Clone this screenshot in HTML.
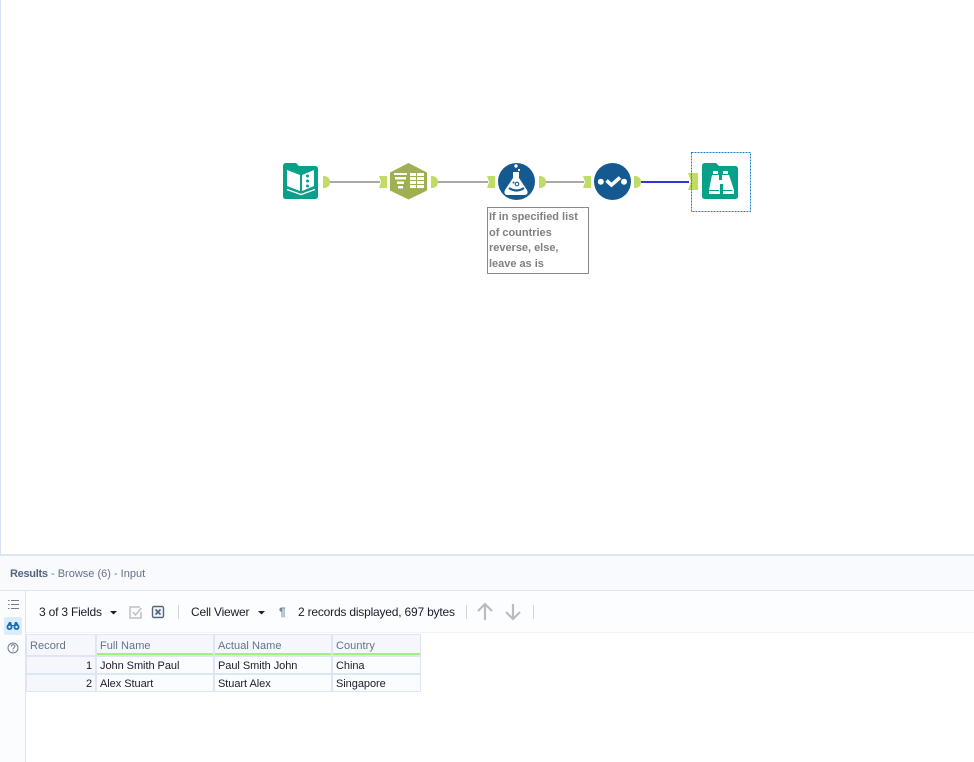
<!DOCTYPE html>
<html><head><meta charset="utf-8">
<style>
html,body{margin:0;padding:0;background:#fff}
#p{position:relative;width:974px;height:762px;overflow:hidden;background:#fff;font-family:"Liberation Sans",sans-serif;font-size:12px;color:#1c1c2a}
#p div{position:absolute;box-sizing:border-box}
.t{white-space:nowrap;line-height:16px;letter-spacing:-.2px}
.s{font-size:11px;letter-spacing:-.05px}
.g{color:#66728a;letter-spacing:.05px}
.c{background:#fbfcff}
.h{background:#f5f7fc}
.note{font-weight:bold;color:#808080;font-size:11px;line-height:15.500px;letter-spacing:-.02px}
</style></head><body><div id="p">
<div style="left:0;top:0;width:1px;height:555px;background:#d5e2f4"></div>
<svg style="position:absolute;left:0;top:0" width="974" height="300" viewBox="0 0 974 300">
<g stroke="#a8a8a8" stroke-width="2"><path d="M330 182H380M438 182H488M546 182H584"/></g>
<path d="M641 182H689" stroke="#3535e0" stroke-width="2"/>
<g fill="#c1dc66">
<path d="M323 176h2q5 1 5 6t-5 6h-2z"/>
<path d="M431 176h2q5 1 5 6t-5 6h-2z"/><path d="M539 176h2q5 1 5 6t-5 6h-2z"/><path d="M634 176h2q5 1 5 6t-5 6h-2z"/>
<path d="M379 176h8v12h-8l2-6z"/><path d="M487 176h8v12h-8l2-6z"/><path d="M583 176h8v12h-8l2-6z"/>
<path d="M688 173h10v17h-10l3-8.500z"/>
</g>
<!-- input book -->
<path d="M283 166q0-3 3-3h10l3 3h16q3 0 3 3v27q0 3-3 3h-29q-3 0-3-3z" fill="#08a088"/>
<path d="M287 170l13 5v16l-13-5zM302 175l12-5v16l-12 5z" fill="#fff"/>
<path d="M287 189.500l14 5 14-5" fill="none" stroke="#fff" stroke-width="1.300"/>
<g fill="#08a088"><circle cx="307.500" cy="176" r="1.500"/><circle cx="307.500" cy="181" r="1.500"/><circle cx="307.500" cy="186" r="1.500"/></g>
<!-- hexagon -->
<path d="M408.500 163l18.500 9.500v18l-18.500 9-18.500-9v-18z" fill="#9fb052"/>
<g fill="#fff"><path d="M394 173h13v2h-13zM395 177h11v2.500h-11zM397 181.500h7v2.500h-7zM398 186h5v2.500h-5z"/>
<rect x="410" y="173" width="14" height="15"/></g>
<path d="M410 176.500h14M410 180.500h14M410 184.500h14M416.500 173v15" stroke="#9fb052" stroke-width="1"/>
<!-- flask -->
<circle cx="516.500" cy="181.500" r="18.500" fill="#14598f"/>
<g fill="#fff"><circle cx="516" cy="166" r="1.700"/><circle cx="519" cy="170" r="1.100"/></g>
<path d="M513 172h6v6l8 12q2 5-3 5h-16q-5 0-3-5l8-12z" fill="#fff"/>
<path d="M509 188q7.500 5 15 0" fill="none" stroke="#14598f" stroke-width="2.200"/>
<circle cx="517" cy="184" r="1.800" fill="none" stroke="#14598f" stroke-width="1.100"/><circle cx="513.500" cy="182.500" r="1" fill="#14598f"/>
<!-- check -->
<circle cx="612.500" cy="181.500" r="18.500" fill="#14598f"/>
<g fill="#fff"><circle cx="600.800" cy="181.700" r="3"/><circle cx="624" cy="181.700" r="3"/></g>
<path d="M606.500 180.500l5 4.500 8.500-7.500" fill="none" stroke="#fff" stroke-width="3.600"/>
<!-- browse -->
<rect x="691.500" y="152.500" width="59" height="59" fill="none" stroke="#1b80c8" stroke-dasharray="2 1"/>
<path d="M702 166q0-3 3-3h11l3 3h16q3 0 3 3v27q0 3-3 3h-30q-3 0-3-3z" fill="#08a088"/>
<g fill="#fff"><path d="M713 171h5v3h-5zM723 171h5v3h-5z"/>
<path d="M712 175h7v5h3v-5h7l5 15v4h-11v-10h-3v10h-11v-4z"/></g>
<path d="M709 190.500h10M722.500 190.500h10" stroke="#08a088" stroke-width="1"/>
</svg>
<div style="left:487px;top:207px;width:102px;height:67px;border:1px solid #8a8a8a;background:#fff"></div>
<div class="note t" style="left:489px;top:210px;line-height:15.500px;letter-spacing:-.02px">If in specified list<br>of countries<br>reverse, else,<br>leave as is</div>

<div style="left:0;top:554px;width:974px;height:2px;background:#dde5f1"></div>
<div style="left:0;top:556px;width:974px;height:34px;background:#f8fafd"></div>
<div style="left:0;top:590px;width:974px;height:1px;background:#dde5f1"></div>
<div class="t" style="left:10px;top:566px;font-size:11px;color:#56647e;font-weight:bold;letter-spacing:-.3px">Results</div>
<div class="t" style="left:51px;top:566px;font-size:11px;color:#66728a;letter-spacing:0">- Browse (6) - Input</div>
<div style="left:0;top:591px;width:25px;height:171px;background:#fbfcfe"></div>
<div style="left:25px;top:591px;width:1px;height:171px;background:#dde5f1"></div>
<div style="left:4px;top:617px;width:18px;height:18px;background:#dcecfb;border-radius:2px"></div>
<svg style="position:absolute;left:0;top:591px" width="26" height="70" viewBox="0 0 26 70">
<g stroke="#6f7b92" fill="none"><path d="M11 9.500h8M11 13.500h8M11 17.500h8M8 9.500h1.500M8 13.500h1.500M8 17.500h1.500"/>
<circle cx="13" cy="57" r="5"/><path d="M11.300 55.500q.5-2 2-1.800 2 .4 1.500 2-.5 1-1.600 1.800v.8M13.200 59.500v1"/></g>
<g fill="#1a6fb8"><circle cx="9.500" cy="36" r="3"/><circle cx="16.500" cy="36" r="3"/><path d="M9 31h2l1 3h2l1-3h2l2 4h-12z"/></g>
<g fill="#dcecfb"><circle cx="9.500" cy="36" r="1.200"/><circle cx="16.500" cy="36" r="1.200"/></g>
</svg>
<div style="left:26px;top:591px;width:948px;height:41px;background:#fcfdfe"></div>
<div style="left:26px;top:632px;width:948px;height:1px;background:#f1f3f8"></div>
<div class="t" style="left:39px;top:604px">3 of 3 Fields</div>
<div class="t" style="left:191px;top:604px">Cell Viewer</div>
<div class="t" style="left:298px;top:604px">2 records displayed, 697 bytes</div>
<div class="t" style="left:279px;top:604px;color:#6b86a6;font-weight:bold">¶</div>
<svg style="position:absolute;left:100px;top:595px" width="450" height="34" viewBox="100 595 450 34">
<g fill="#1c1c2a"><path d="M110 611h7l-3.500 3.500z"/><path d="M258 611h7l-3.500 3.500z"/></g>
<path d="M140 607h-10v11h11v-6" fill="none" stroke="#c0c0c0" stroke-width="1.500"/><path d="M133 612l2.500 3 6-7" fill="none" stroke="#c0c0c0" stroke-width="1.500"/>
<rect x="152.500" y="606.500" width="11" height="11" rx="1.500" fill="#f2f4f8" stroke="#56647e" stroke-width="1.400"/>
<path d="M155.500 609.500l5 5M160.500 609.500l-5 5" stroke="#56647e" stroke-width="1.700"/>
<g stroke="#d0d3d8"><path d="M178.500 605v14M466.500 605v14M533.500 605v14"/></g>
<g fill="none" stroke="#b9bcc1" stroke-width="2.200"><path d="M485 620v-15M478 611l7-7 7 7"/><path d="M513 604v15M506 612l7 7 7-7"/></g>
</svg>

<div style="left:26px;top:634px;width:395px;height:58px;background:#dfe6f3"></div>
<div class="h" style="left:27px;top:635px;width:68px;height:20px"></div>
<div class="h" style="left:97px;top:635px;width:116px;height:20px"></div>
<div class="h" style="left:215px;top:635px;width:116px;height:20px"></div>
<div class="h" style="left:333px;top:635px;width:87px;height:20px"></div>
<div style="left:97px;top:653px;width:116px;height:2px;background:#a4f07e"></div>
<div style="left:215px;top:653px;width:116px;height:2px;background:#a4f07e"></div>
<div style="left:333px;top:653px;width:87px;height:2px;background:#a4f07e"></div>
<div class="h" style="left:27px;top:657px;width:68px;height:16px"></div>
<div class="c" style="left:97px;top:657px;width:116px;height:16px"></div>
<div class="c" style="left:215px;top:657px;width:116px;height:16px"></div>
<div class="c" style="left:333px;top:657px;width:87px;height:16px"></div>
<div class="h" style="left:27px;top:675px;width:68px;height:16px"></div>
<div class="c" style="left:97px;top:675px;width:116px;height:16px"></div>
<div class="c" style="left:215px;top:675px;width:116px;height:16px"></div>
<div class="c" style="left:333px;top:675px;width:87px;height:16px"></div>
<div class="t s g" style="left:30px;top:638px">Record</div>
<div class="t s g" style="left:100px;top:638px">Full Name</div>
<div class="t s g" style="left:218px;top:638px">Actual Name</div>
<div class="t s g" style="left:336px;top:638px">Country</div>
<div class="t s" style="left:86px;top:658px">1</div>
<div class="t s" style="left:100px;top:658px">John Smith Paul</div>
<div class="t s" style="left:218px;top:658px">Paul Smith John</div>
<div class="t s" style="left:336px;top:658px">China</div>
<div class="t s" style="left:86px;top:676px">2</div>
<div class="t s" style="left:100px;top:676px">Alex Stuart</div>
<div class="t s" style="left:218px;top:676px">Stuart Alex</div>
<div class="t s" style="left:336px;top:676px">Singapore</div>
</div></body></html>
